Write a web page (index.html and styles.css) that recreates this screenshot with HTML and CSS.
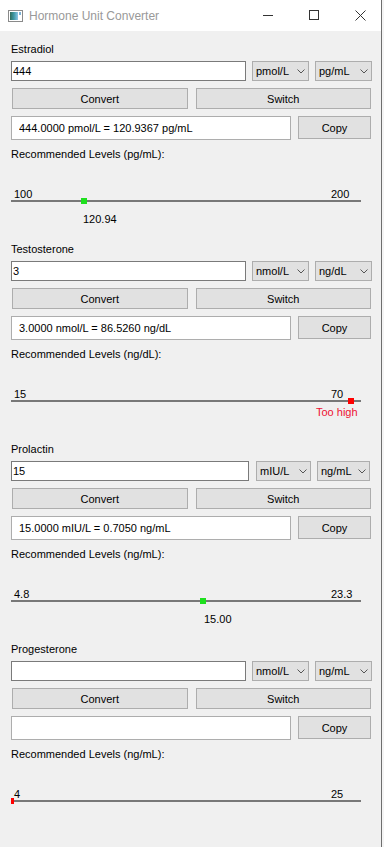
FILE: index.html
```html
<!DOCTYPE html>
<html lang="en">
<head>
    <meta charset="UTF-8">
    <meta name="viewport" content="width=device-width, initial-scale=1.0">
    <title>Hormone Unit Converter</title>
    <link rel="stylesheet" href="styles.css">
</head>
<body>
    <div class="window">
        <header class="titlebar">
            <svg class="app-icon" width="15" height="12" viewBox="0 0 15 12">
                <defs>
                    <linearGradient id="iconFill" x1="0" y1="0" x2="1" y2="0">
                        <stop offset="0" stop-color="#2f6d5a"/>
                        <stop offset="0.5" stop-color="#3f9aa8"/>
                        <stop offset="1" stop-color="#8ec6e6"/>
                    </linearGradient>
                </defs>
                <rect x="0.5" y="0.5" width="14" height="11" fill="#fff" stroke="#8a8a8a"/>
                <rect x="2" y="2" width="8" height="8" fill="url(#iconFill)"/>
                <rect x="11" y="2" width="2" height="3" fill="#7fb3d6"/>
            </svg>
            <span class="title">Hormone Unit Converter</span>
            <div class="controls">
                <span class="ctl">
                    <svg width="11" height="11" viewBox="0 0 11 11"><line x1="0" y1="5.5" x2="10" y2="5.5" stroke="#333" stroke-width="1"/></svg>
                </span>
                <span class="ctl">
                    <svg width="11" height="11" viewBox="0 0 11 11"><rect x="0.5" y="0.5" width="9" height="9" fill="none" stroke="#333" stroke-width="1"/></svg>
                </span>
                <span class="ctl">
                    <svg width="11" height="11" viewBox="0 0 11 11"><path d="M0.5 0.5 L10.5 10.5 M10.5 0.5 L0.5 10.5" stroke="#333" stroke-width="1"/></svg>
                </span>
            </div>
        </header>

        <main class="content">
            <section class="hormone">
                <div class="name">Estradiol</div>
                <div class="row row--input">
                    <input class="value" type="text" value="444">
                    <div class="combo"><span>pmol/L</span><svg class="chev" width="8" height="5" viewBox="0 0 8 5"><polyline points="0.5,0.5 4,4 7.5,0.5" fill="none" stroke="#555"/></svg></div>
                    <div class="combo"><span>pg/mL</span><svg class="chev" width="8" height="5" viewBox="0 0 8 5"><polyline points="0.5,0.5 4,4 7.5,0.5" fill="none" stroke="#555"/></svg></div>
                </div>
                <div class="row row--buttons">
                    <button class="btn">Convert</button>
                    <button class="btn">Switch</button>
                </div>
                <div class="row row--result">
                    <input class="result" type="text" readonly value="444.0000 pmol/L = 120.9367 pg/mL">
                    <button class="btn copy">Copy</button>
                </div>
                <div class="levels-title">Recommended Levels (pg/mL):</div>
                <div class="levels">
                    <div class="range"><span>100</span><span class="range-max">200</span></div>
                    <div class="track">
                        <span class="marker marker--ok" style="left: 70px"></span>
                    </div>
                    <span class="reading" style="left: 72px">120.94</span>
                </div>
            </section>

            <section class="hormone">
                <div class="name">Testosterone</div>
                <div class="row row--input">
                    <input class="value" type="text" value="3">
                    <div class="combo"><span>nmol/L</span><svg class="chev" width="8" height="5" viewBox="0 0 8 5"><polyline points="0.5,0.5 4,4 7.5,0.5" fill="none" stroke="#555"/></svg></div>
                    <div class="combo"><span>ng/dL</span><svg class="chev" width="8" height="5" viewBox="0 0 8 5"><polyline points="0.5,0.5 4,4 7.5,0.5" fill="none" stroke="#555"/></svg></div>
                </div>
                <div class="row row--buttons">
                    <button class="btn">Convert</button>
                    <button class="btn">Switch</button>
                </div>
                <div class="row row--result">
                    <input class="result" type="text" readonly value="3.0000 nmol/L = 86.5260 ng/dL">
                    <button class="btn copy">Copy</button>
                </div>
                <div class="levels-title">Recommended Levels (ng/dL):</div>
                <div class="levels">
                    <div class="range"><span>15</span><span class="range-max">70</span></div>
                    <div class="track">
                        <span class="marker marker--bad" style="left: 337px"></span>
                    </div>
                    <span class="reading reading--warn" style="left: 305px">Too high</span>
                </div>
            </section>

            <section class="hormone">
                <div class="name">Prolactin</div>
                <div class="row row--input row--narrow">
                    <input class="value" type="text" value="15">
                    <div class="combo"><span>mIU/L</span><svg class="chev" width="8" height="5" viewBox="0 0 8 5"><polyline points="0.5,0.5 4,4 7.5,0.5" fill="none" stroke="#555"/></svg></div>
                    <div class="combo"><span>ng/mL</span><svg class="chev" width="8" height="5" viewBox="0 0 8 5"><polyline points="0.5,0.5 4,4 7.5,0.5" fill="none" stroke="#555"/></svg></div>
                </div>
                <div class="row row--buttons">
                    <button class="btn">Convert</button>
                    <button class="btn">Switch</button>
                </div>
                <div class="row row--result">
                    <input class="result" type="text" readonly value="15.0000 mIU/L = 0.7050 ng/mL">
                    <button class="btn copy">Copy</button>
                </div>
                <div class="levels-title">Recommended Levels (ng/mL):</div>
                <div class="levels">
                    <div class="range"><span>4.8</span><span class="range-max">23.3</span></div>
                    <div class="track">
                        <span class="marker marker--ok" style="left: 189px"></span>
                    </div>
                    <span class="reading" style="left: 193px">15.00</span>
                </div>
            </section>

            <section class="hormone">
                <div class="name">Progesterone</div>
                <div class="row row--input">
                    <input class="value" type="text" value="">
                    <div class="combo"><span>nmol/L</span><svg class="chev" width="8" height="5" viewBox="0 0 8 5"><polyline points="0.5,0.5 4,4 7.5,0.5" fill="none" stroke="#555"/></svg></div>
                    <div class="combo"><span>ng/mL</span><svg class="chev" width="8" height="5" viewBox="0 0 8 5"><polyline points="0.5,0.5 4,4 7.5,0.5" fill="none" stroke="#555"/></svg></div>
                </div>
                <div class="row row--buttons">
                    <button class="btn">Convert</button>
                    <button class="btn">Switch</button>
                </div>
                <div class="row row--result">
                    <input class="result" type="text" readonly value="">
                    <button class="btn copy">Copy</button>
                </div>
                <div class="levels-title">Recommended Levels (ng/mL):</div>
                <div class="levels">
                    <div class="range"><span>4</span><span class="range-max">25</span></div>
                    <div class="track">
                        <span class="marker marker--bad" style="left: -3px"></span>
                    </div>
                </div>
            </section>
        </main>
    </div>
</body>
</html>
```

FILE: styles.css
```css
html {
    background: #f4f4f4;
}

body {
    margin: 0;
    width: 384px;
    height: 847px;
    overflow: hidden;
    font-family: 'Liberation Sans', Arial, sans-serif;
    font-size: 11px;
    color: #000;
}

.window {
    width: 381px;
    height: 847px;
    border-right: 1px solid #6e6e6e;
    background: #f0f0f0;
}

/* title bar */
.titlebar {
    height: 31px;
    background: #fff;
    display: flex;
    align-items: center;
}

.app-icon {
    margin-left: 8px;
    margin-top: 1px;
    flex-shrink: 0;
}

.title {
    margin-left: 6px;
    font-size: 12px;
    line-height: 14px;
    color: #999;
}

.controls {
    margin-left: auto;
    margin-right: -2px;
    display: flex;
    height: 31px;
}

.ctl {
    width: 46px;
    display: flex;
    align-items: center;
    justify-content: center;
}

/* sections */
.hormone {
    height: 200px;
    padding: 12px 9px 0 11px;
    box-sizing: border-box;
}

.name {
    line-height: 13px;
    height: 13px;
}

.row {
    display: flex;
}

.row--input {
    margin-top: 5px;
    height: 20px;
    gap: 6px;
}

.row--buttons {
    margin-top: 7px;
    height: 21px;
    gap: 8px;
    padding: 0 1px;
}

.row--result {
    margin-top: 7px;
    height: 24px;
    gap: 7px;
}

input {
    font-family: inherit;
    font-size: 11px;
    color: #000;
    background: #fff;
    box-sizing: border-box;
    margin: 0;
    outline: none;
    min-width: 0;
}

.value {
    flex: 1;
    height: 20px;
    border: 1px solid #7a7a7a;
    padding: 0 1px;
}

.result {
    flex: 1;
    height: 24px;
    border: 1px solid #adadad;
    padding: 0 7px;
}

.combo {
    width: 57px;
    height: 20px;
    box-sizing: border-box;
    border: 1px solid #adadad;
    background: #e1e1e1;
    display: flex;
    align-items: center;
    justify-content: space-between;
    padding: 0 3px 0 3px;
    line-height: 13px;
}

.row--narrow .combo:first-of-type {
    width: 55px;
    margin-left: 1px;
}

.row--narrow .combo:last-child {
    width: 53px;
    margin-right: 2px;
}

.chev {
    margin-top: 1px;
}

.btn {
    flex: 1;
    margin: 0;
    padding: 0;
    font-family: inherit;
    font-size: 11px;
    color: #000;
    background: #e1e1e1;
    border: 1px solid #adadad;
    box-sizing: border-box;
}

.copy {
    flex: 0 0 73px;
    height: 23px;
    margin-right: 1px;
}

/* recommended levels */
.levels-title {
    margin-top: 8px;
    height: 13px;
    line-height: 13px;
}

.levels {
    position: relative;
    height: 70px;
    width: 350px;
    padding-top: 27px;
    box-sizing: border-box;
}

.range {
    height: 12px;
    line-height: 12px;
    padding-left: 3px;
    display: flex;
    justify-content: space-between;
}

.range-max {
    width: 30px;
}

.track {
    position: relative;
    height: 2px;
    background: #787878;
    clip-path: inset(-4px 0 -4px 0);
}

.marker {
    position: absolute;
    top: -2px;
    width: 6px;
    height: 6px;
}

.marker--ok {
    background: #1ee01e;
}

.marker--bad {
    background: #f00;
}

.reading {
    position: absolute;
    top: 52px;
    line-height: 13px;
}

.reading--warn {
    top: 45px;
    color: #ee1133;
}
```
